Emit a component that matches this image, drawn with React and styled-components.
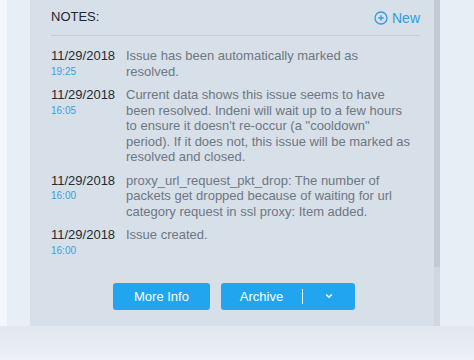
import React from "react";
import styled, { createGlobalStyle } from "styled-components";

const GlobalStyle = createGlobalStyle`
  body {
    margin: 0;
    font-family: "Liberation Sans", Arial, sans-serif;
    -webkit-font-smoothing: antialiased;
  }
`;

// lines kept as they wrap in the source layout
const notes = [
  {
    date: "11/29/2018",
    time: "19:25",
    lines: ["Issue has been automatically marked as", "resolved."],
  },
  {
    date: "11/29/2018",
    time: "16:05",
    lines: [
      "Current data shows this issue seems to have",
      "been resolved. Indeni will wait up to a few hours",
      'to ensure it doesn\'t re-occur (a "cooldown"',
      "period). If it does not, this issue will be marked as",
      "resolved and closed.",
    ],
  },
  {
    date: "11/29/2018",
    time: "16:00",
    lines: [
      "proxy_url_request_pkt_drop: The number of",
      "packets get dropped because of waiting for url",
      "category request in ssl proxy: Item added.",
    ],
  },
  {
    date: "11/29/2018",
    time: "16:00",
    lines: ["Issue created."],
  },
];

const PlusCircle = () => (
  <svg width="14" height="14" viewBox="0 0 14 14" fill="none">
    <circle cx="7" cy="7" r="6" stroke="#2d9ee0" strokeWidth="1.3" />
    <path d="M7 4.2v5.6M4.2 7h5.6" stroke="#2d9ee0" strokeWidth="1.3" />
  </svg>
);

const Chevron = () => (
  <svg width="8" height="6" viewBox="0 0 8 6" fill="none">
    <path d="M1.2 1.5L4 4.3l2.8-2.8" stroke="#fff" strokeWidth="1.4" />
  </svg>
);

const App = () => {
  return (
    <Page>
      <GlobalStyle />
      <Stage>
        <Panel>
          <Content>
            <Header>
              <Title>NOTES:</Title>
              <NewLink>
                <PlusCircle />
                New
              </NewLink>
            </Header>
            <NoteList>
              {notes.map((n, i) => (
                <NoteRow key={i}>
                  <Stamp>
                    <DateText>{n.date}</DateText>
                    <TimeText>{n.time}</TimeText>
                  </Stamp>
                  <Message>
                    {n.lines.map((l, j) => (
                      <Line key={j}>{l}</Line>
                    ))}
                  </Message>
                </NoteRow>
              ))}
            </NoteList>
            <Actions>
              <Button $width={97}>More Info</Button>
              <SplitButton>
                <SplitMain>Archive</SplitMain>
                <SplitDivider />
                <SplitToggle>
                  <Chevron />
                </SplitToggle>
              </SplitButton>
            </Actions>
          </Content>
          <Scrollbar>
            <Thumb />
          </Scrollbar>
        </Panel>
      </Stage>
      <Footer />
    </Page>
  );
};

const Page = styled.div`
  width: 474px;
  height: 360px;
  display: flex;
  flex-direction: column;
  background: #e8eef6;
  overflow: hidden;
`;

const Stage = styled.div`
  display: flex;
  padding-left: 23px;
  border-left: 7px solid #f3f6fb;
`;

const Panel = styled.div`
  width: 410px;
  height: 326px;
  display: flex;
  background: #d7dfe8;
`;

const Content = styled.div`
  flex: 1;
  display: flex;
  flex-direction: column;
  padding: 0 14px 16px 21px;
`;

const Header = styled.div`
  height: 32px;
  padding-bottom: 3px;
  display: flex;
  align-items: center;
  justify-content: space-between;
  border-bottom: 1px solid #c5ccd6;
`;

const Title = styled.div`
  font-size: 13px;
  color: #1e2630;
`;

const NewLink = styled.div`
  display: flex;
  align-items: center;
  gap: 4px;
  font-size: 14px;
  color: #2d9ee0;
  margin-top: 3px;
`;

const NoteList = styled.div`
  display: flex;
  flex-direction: column;
  gap: 8px;
  padding-top: 12px;
`;

const NoteRow = styled.div`
  display: flex;
  gap: 10px;
`;

const Stamp = styled.div`
  width: 65px;
  flex-shrink: 0;
  display: flex;
  flex-direction: column;
`;

const DateText = styled.div`
  font-size: 13px;
  line-height: 15.5px;
  color: #232b34;
`;

const TimeText = styled.div`
  font-size: 10px;
  line-height: 15px;
  color: #3a9fdf;
`;

const Message = styled.div`
  flex: 1;
  font-size: 13px;
  line-height: 15.5px;
  color: #6e7782;
`;

const Line = styled.div`
  white-space: nowrap;
`;

const Actions = styled.div`
  margin-top: 25px;
  display: flex;
  justify-content: center;
  gap: 11px;
  padding-right: 3px;
`;

const Button = styled.div`
  width: ${(p) => p.$width}px;
  height: 27px;
  display: flex;
  align-items: center;
  justify-content: center;
  background: #21a5ee;
  border-radius: 3px;
  color: #fff;
  font-size: 13px;
`;

const SplitButton = styled.div`
  width: 134px;
  height: 27px;
  display: flex;
  align-items: center;
  background: #21a5ee;
  border-radius: 3px;
  color: #fff;
  font-size: 13px;
`;

const SplitMain = styled.div`
  width: 81px;
  text-align: center;
`;

const SplitDivider = styled.div`
  width: 1px;
  height: 15px;
  background: rgba(255, 255, 255, 0.85);
`;

const SplitToggle = styled.div`
  flex: 1;
  display: flex;
  justify-content: center;
  align-items: center;
`;

const Scrollbar = styled.div`
  width: 6px;
  background: #d0d7e0;
  display: flex;
  flex-direction: column;
`;

const Thumb = styled.div`
  height: 267px;
  background: #c3cad4;
`;

const Footer = styled.div`
  flex: 1;
  background: linear-gradient(180deg, #e3e8ef 0%, #e7ecf3 60%, #eef2f7 100%);
`;

export default App;
